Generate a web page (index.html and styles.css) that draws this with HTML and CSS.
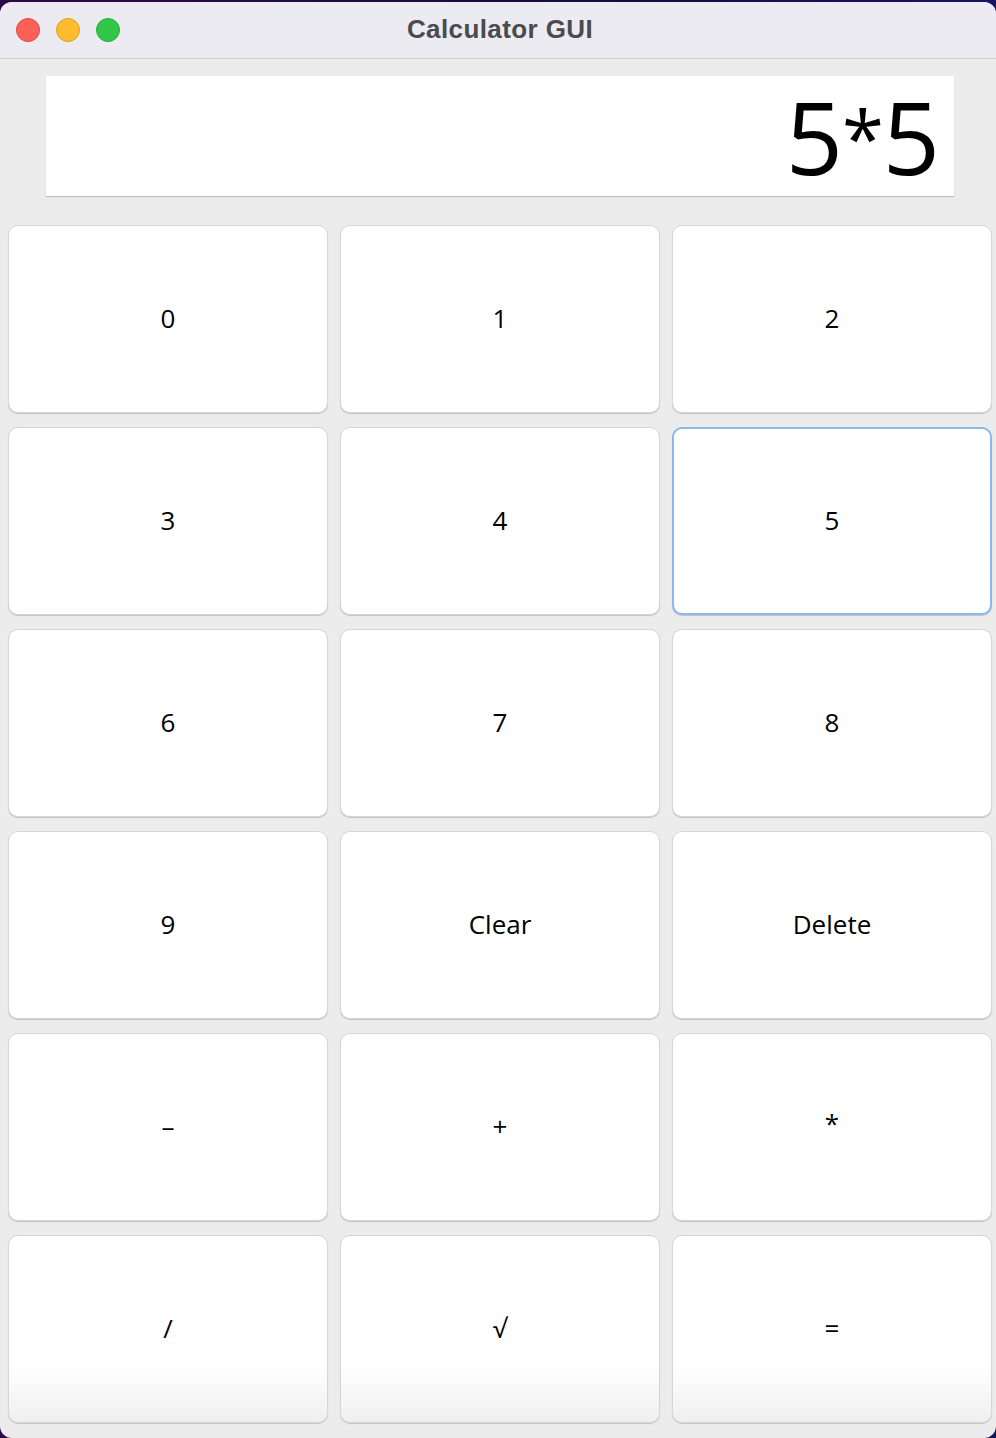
FILE: index.html
```html
<!DOCTYPE html>
<html>
<head>
<meta charset="utf-8">
<title>Calculator GUI</title>
<link rel="stylesheet" href="styles.css">
</head>
<body>
<div class="window">
  <div class="titlebar">
    <div class="lights">
      <span class="light red"></span>
      <span class="light yellow"></span>
      <span class="light green"></span>
    </div>
    <div class="title">Calculator GUI</div>
  </div>
  <div class="content">
    <div class="display">5<span class="op">*</span>5</div>
    <div class="keys">
      <button class="key">0</button>
      <button class="key">1</button>
      <button class="key">2</button>
      <button class="key">3</button>
      <button class="key">4</button>
      <button class="key focused">5</button>
      <button class="key">6</button>
      <button class="key">7</button>
      <button class="key">8</button>
      <button class="key">9</button>
      <button class="key">Clear</button>
      <button class="key">Delete</button>
      <button class="key">–</button>
      <button class="key">+</button>
      <button class="key star">*</button>
      <button class="key last">/</button>
      <button class="key last">√</button>
      <button class="key last">=</button>
    </div>
  </div>
</div>
</body>
</html>
```

FILE: styles.css
```css
html, body {
  margin: 0;
  padding: 0;
}
body {
  width: 996px;
  height: 1438px;
  background: linear-gradient(90deg, #2a0a48 0%, #1a0a40 60%, #151560 100%);
  overflow: hidden;
  font-family: "Open Sans", "Liberation Sans", sans-serif;
}
.window {
  margin-top: 2px;
  height: 1436px;
  background: #ececec;
  border-radius: 12px;
  overflow: hidden;
  display: flex;
  flex-direction: column;
}
.titlebar {
  height: 56px;
  flex: none;
  background: #ecebf1;
  border-bottom: 1px solid #cfcfd2;
  display: flex;
  align-items: center;
  position: relative;
}
.lights {
  display: flex;
  gap: 16px;
  padding-left: 16px;
}
.light {
  width: 24px;
  height: 24px;
  border-radius: 50%;
  box-sizing: border-box;
}
.red { background: #fe5f57; border: 1px solid #e2463f; }
.yellow { background: #febc2e; border: 1px solid #e1a116; }
.green { background: #33c748; border: 1px solid #27aa35; }
.title {
  position: absolute;
  left: 0;
  right: 0;
  top: 12px;
  text-align: center;
  font-family: "Liberation Sans", "Open Sans", sans-serif;
  font-weight: bold;
  font-size: 26px;
  color: #4b4a4d;
  letter-spacing: 0.4px;
  padding-left: 4px;
}
.content {
  padding: 17px 4px 0 8px;
  display: flex;
  flex-direction: column;
}
.display {
  margin: 0 38px 29px 38px;
  height: 120px;
  background: #ffffff;
  box-shadow: 0 1px 1px rgba(0, 0, 0, 0.18);
  text-align: right;
  font-size: 100px;
  line-height: 120px;
  letter-spacing: -4px;
  padding-right: 18px;
  color: #000;
  box-sizing: border-box;
}
.op {
  font-size: 76px;
  position: relative;
  top: -8px;
  margin: 0 3px;
}
.keys {
  display: grid;
  grid-template-columns: repeat(3, 320px);
  grid-auto-rows: 188px;
  column-gap: 12px;
  row-gap: 14px;
}
.key {
  margin: 0;
  padding: 0;
  background: #ffffff;
  border: 1px solid #d6d6d6;
  border-radius: 10px;
  box-shadow: 0 1px 1px rgba(0, 0, 0, 0.18);
  font-family: "Open Sans", "Liberation Sans", sans-serif;
  font-size: 26px;
  color: #000;
  display: flex;
  align-items: center;
  justify-content: center;
  padding-bottom: 2px;
}
.key.focused {
  border: 2px solid #8bb9ee;
}
.key.star {
  padding-bottom: 8px;
}
.key.last {
  background: linear-gradient(180deg, #ffffff 0%, #ffffff 70%, #efefef 100%);
}
```
